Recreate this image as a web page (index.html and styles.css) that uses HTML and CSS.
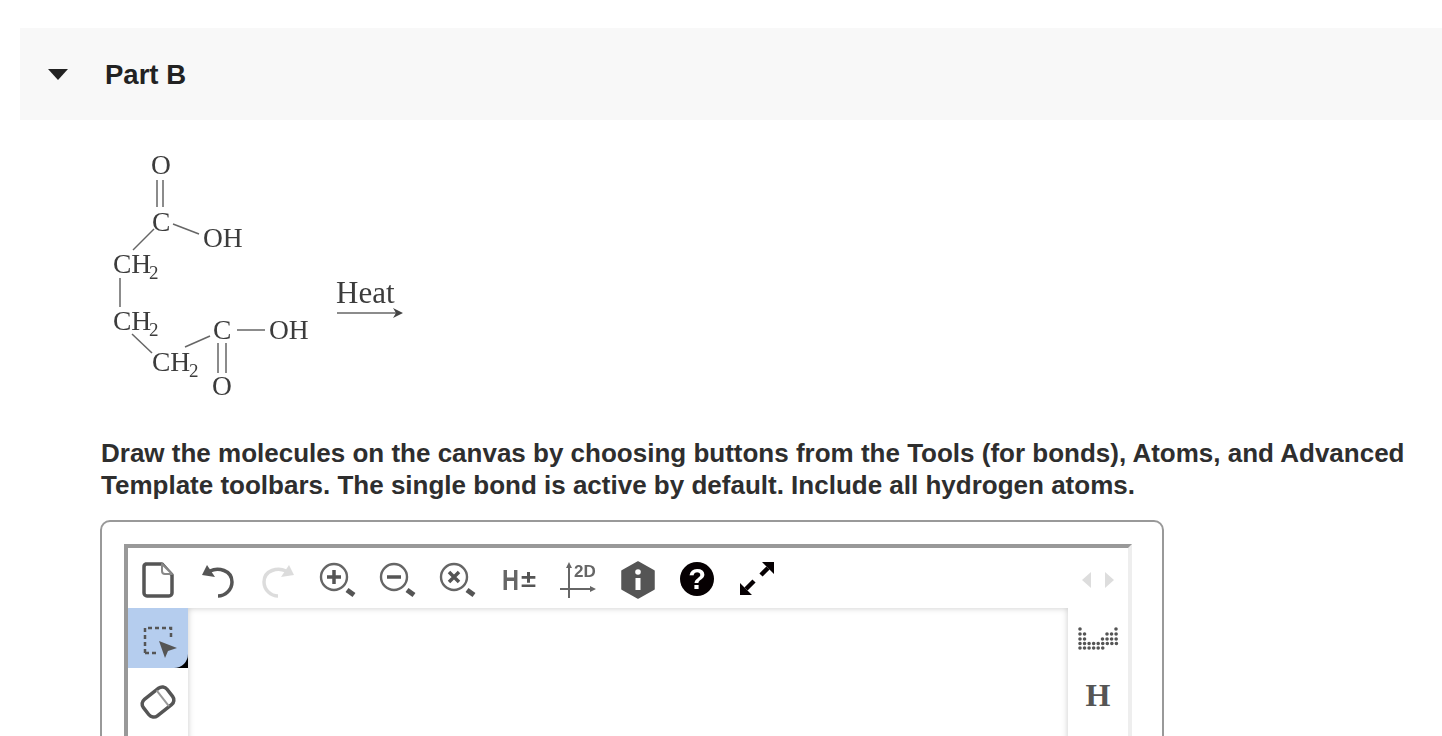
FILE: index.html
```html
<!DOCTYPE html>
<html lang="en">
<head>
<meta charset="utf-8">
<title>Part B</title>
<link rel="stylesheet" href="styles.css">
</head>
<body>
<header class="part-header">
  <span class="caret"></span>
  <h2 class="part-title">Part B</h2>
</header>
<main class="part-body">
  <svg class="reaction" width="320" height="270" viewBox="100 145 320 270">
    <g class="bonds">
      <path d="M157 180V207M163 180V207"/>
      <path d="M173 224L199 234"/>
      <path d="M154 229L133 250"/>
      <path d="M120 278V307"/>
      <path d="M132 334L152 353"/>
      <path d="M185 347L210 336"/>
      <path d="M237 330H265"/>
      <path d="M218 343V373M226 343V373"/>
      <path d="M337 313H398"/>
    </g>
    <path class="arrow-head" d="M403 313L393 308L396 313L393 318Z"/>
    <g class="chem">
      <text x="151" y="174">O</text>
      <text x="152" y="231">C</text>
      <text x="203" y="247">OH</text>
      <text x="113" y="273">CH</text><text class="sub" x="149" y="279">2</text>
      <text x="113" y="330">CH</text><text class="sub" x="149" y="336">2</text>
      <text x="152" y="371">CH</text><text class="sub" x="189" y="377">2</text>
      <text x="213" y="339">C</text>
      <text x="269" y="339">OH</text>
      <text x="212" y="395">O</text>
      <text class="heat" x="336" y="303">Heat</text>
    </g>
  </svg>
  <p class="prompt">Draw the molecules on the canvas by choosing buttons from the Tools (for bonds), Atoms, and Advanced Template toolbars. The single bond is active by default. Include all hydrogen atoms.</p>
  <section class="editor-box">
    <div class="editor">
      <div class="top-bar">
        <div class="btn"><svg class="ico" viewBox="0 0 44 44"><path class="line" d="M10 8H26L36 19V37A3 3 0 0 1 33 40H11A3 3 0 0 1 8 37V11A3 3 0 0 1 10 8Z"/><path class="fold" d="M26 8V15A3 3 0 0 0 29 18H36Z"/></svg></div>
        <div class="btn"><svg class="ico" viewBox="0 0 44 44"><path class="solid" d="M6 19L11 9L19 21Z"/><path class="line" d="M14 15C22 11 36 14 36 26C36 34 29 40 22 40"/></svg></div>
        <div class="btn"><svg class="ico faded" viewBox="0 0 44 44"><path class="solid" d="M38 19L33 9L25 21Z"/><path class="line" d="M30 15C22 11 8 14 8 26C8 34 15 40 22 40"/></svg></div>
        <div class="btn"><svg class="ico" viewBox="0 0 44 44"><circle class="ring" cx="18" cy="21" r="13"/><path class="handle" d="M31 34L38 39"/><path class="mark" d="M11 21H25M18 14V28"/></svg></div>
        <div class="btn"><svg class="ico" viewBox="0 0 44 44"><circle class="ring" cx="18" cy="21" r="13"/><path class="handle" d="M31 34L38 39"/><path class="mark" d="M11 21H25"/></svg></div>
        <div class="btn"><svg class="ico" viewBox="0 0 44 44"><circle class="ring" cx="18" cy="21" r="13"/><path class="handle" d="M31 34L38 39"/><path class="mark" d="M13 16L23 26M23 16L13 26"/></svg></div>
        <div class="btn"><svg class="ico" viewBox="0 0 44 44"><text class="h-big" x="6" y="34" textLength="17" lengthAdjust="spacingAndGlyphs">H</text><text class="h-pm" x="25" y="31" textLength="15" lengthAdjust="spacingAndGlyphs">±</text></svg></div>
        <div class="btn"><svg class="ico" viewBox="0 0 44 44"><path class="axis" d="M13 9V42M4 33H38"/><path class="axis-head" d="M13 6L10 12H16ZM40 33L34 30V36Z"/><text class="two-d" x="18" y="21">2D</text></svg></div>
        <div class="btn"><svg class="ico" viewBox="0 0 44 44"><path class="hex" d="M22 6L38 15V33L22 42L6 33V15Z"/><circle class="white" cx="22" cy="16" r="2.8"/><rect class="white" x="19.5" y="22" width="5" height="12"/></svg></div>
        <div class="btn"><svg class="ico" viewBox="0 0 44 44"><circle class="black" cx="21" cy="23" r="17"/><text class="qmark" x="21" y="33">?</text></svg></div>
        <div class="btn"><svg class="ico" viewBox="0 0 44 44"><path class="black" d="M26 6H38V18ZM4 39V27L16 39Z"/><path class="expand" d="M32 12L25 19M10 33L18 25"/></svg></div>
        <div class="nav"><span class="nav-left"></span><span class="nav-right"></span></div>
      </div>
      <div class="work">
        <div class="tools">
          <div class="btn-wrap"><div class="btn active"><svg class="ico" viewBox="0 0 44 44"><path class="dash" d="M9 37V12H35V24M9 37H22"/><path class="cursor" d="M23 25L41 32L32 35L29 42Z"/></svg></div></div>
          <div class="btn"><svg class="ico" viewBox="0 0 44 44"><g transform="rotate(-38 22 26)"><rect class="line" x="7" y="15.5" width="30" height="21" rx="6"/><path class="thin faint" d="M28 16V36"/></g></svg></div>
        </div>
        <div class="canvas"></div>
        <div class="atoms">
          <div class="btn"><svg class="ico" viewBox="0 0 44 44"><path class="dots" d="M4 13H5M40 13H41M4 18H10M31 18H41M4 23H10M26.5 23H41M4 27.5H41M4 32H27"/></svg></div>
          <div class="btn atom"><span class="atom-label">H</span></div>
        </div>
      </div>
    </div>
  </section>
</main>
</body>
</html>
```

FILE: styles.css
```css
html, body {
  margin: 0;
  height: 736px;
  overflow: hidden;
  background: #fff;
}
body {
  padding-top: 28px;
  box-sizing: border-box;
  font-family: "Liberation Sans", Arial, sans-serif;
  color: #222;
}
.part-header {
  display: flex;
  align-items: center;
  gap: 37px;
  height: 92px;
  margin-left: 20px;
  padding-left: 28px;
  background: #f8f8f8;
}
.caret {
  width: 0;
  height: 0;
  border-left: 10.5px solid transparent;
  border-right: 10.5px solid transparent;
  border-top: 11px solid #222;
}
.part-title {
  margin: 2px 0 0;
  font-size: 27.5px;
  font-weight: 700;
}
.part-body {
  padding-left: 100px;
}
.reaction {
  display: block;
  margin-top: 25px;
  filter: blur(0.5px);
}
.bonds path {
  fill: none;
  stroke: #666;
  stroke-width: 1.5;
}
.arrow-head { fill: #444; }
.chem text {
  font-family: "Liberation Serif", "Times New Roman", serif;
  font-size: 27.5px;
  fill: #3c3c3c;
}
.chem .sub { font-size: 19px; }
.chem .heat { font-size: 31px; }
.prompt {
  width: 1320px;
  margin: 22px 0 19px 1px;
  font-size: 26px;
  line-height: 32px;
  font-weight: 700;
  color: #2e2e2e;
}
.editor-box {
  box-sizing: border-box;
  width: 1064px;
  height: 700px;
  padding: 22px 30px 0 22px;
  border: 2px solid #999;
  border-radius: 10px;
}
.editor {
  height: 640px;
  border-style: solid;
  border-width: 4px;
  border-color: #999 #eee #999 #999;
}
.top-bar {
  display: flex;
  height: 60px;
}
.btn {
  display: flex;
  flex: none;
  align-items: center;
  justify-content: center;
  width: 60px;
  height: 60px;
  background: #fff;
}
.ico {
  display: block;
  width: 44px;
  height: 44px;
  filter: blur(0.4px);
}
.faded { opacity: 0.2; }
.line, .thin, .ring, .handle, .mark, .dash, .axis, .expand {
  fill: none;
  stroke: #555;
}
.line { stroke-width: 3.5; stroke-linejoin: round; }
.thin { stroke-width: 2; }
.faint { stroke: #999; }
.fold { fill: #fff; stroke: #888; stroke-width: 2; stroke-linejoin: round; }
.solid, .cursor, .hex, .axis-head { fill: #555; }
.ring { stroke: #666; stroke-width: 2.4; }
.handle { stroke-width: 5; }
.mark { stroke-width: 3.5; }
.h-big, .h-pm, .two-d, .qmark {
  font-family: "Liberation Sans", Arial, sans-serif;
  font-weight: 700;
}
.h-big { font-size: 30px; fill: #666; }
.h-pm { font-size: 24px; fill: #555; }
.axis { stroke: #666; stroke-width: 2; }
.axis-head { fill: #666; }
.two-d { font-size: 17px; fill: #666; }
.hex { stroke: #555; stroke-width: 1.5; stroke-linejoin: round; }
.white { fill: #fff; }
.black { fill: #060002; }
.qmark { font-size: 29px; fill: #fff; text-anchor: middle; }
.expand { stroke: #060002; stroke-width: 4.5; }
.nav {
  display: flex;
  align-items: center;
  justify-content: center;
  gap: 14px;
  width: 60px;
  height: 60px;
  padding-top: 4px;
  box-sizing: border-box;
  margin-left: auto;
}
.nav-left, .nav-right {
  width: 0;
  height: 0;
  border-top: 8px solid transparent;
  border-bottom: 8px solid transparent;
}
.nav-left { border-right: 9px solid #ddd; }
.nav-right { border-left: 9px solid #ddd; }
.work {
  display: flex;
  height: 576px;
}
.tools, .atoms {
  flex: none;
  width: 60px;
}
.btn-wrap {
  width: 60px;
  height: 60px;
  background: #000;
}
.active {
  background: #b5cdee;
  border-bottom-right-radius: 14px;
}
.dash {
  stroke-width: 2.5;
  stroke-dasharray: 4 3;
}
.canvas {
  flex: 1;
  background: #fff;
  box-shadow: inset 0 0 6px rgba(0, 0, 0, 0.22);
}
.dots {
  fill: none;
  stroke: #555;
  stroke-width: 3.6;
  stroke-linecap: round;
  stroke-dasharray: 0 4.55;
}
.atom {
  font-family: "Liberation Serif", "Times New Roman", serif;
  font-size: 32px;
  font-weight: 700;
  color: #555;
}
.atom-label {
  margin-top: -6px;
}
```
